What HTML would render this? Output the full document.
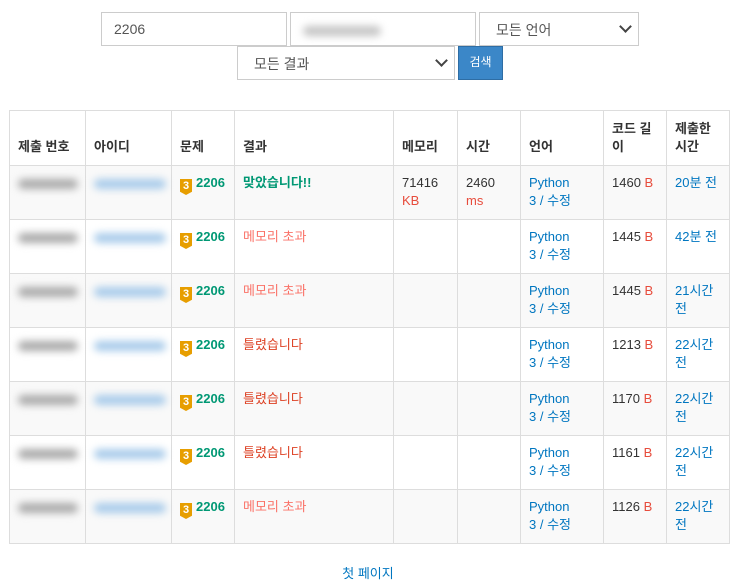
<!DOCTYPE html>
<html><head><meta charset="utf-8"><style>
body{margin:0;background:#fff;font-family:"Liberation Sans","Noto Sans CJK KR",sans-serif;font-size:13px;color:#333;width:736px;height:581px;overflow:hidden;position:relative}
.box{position:absolute;border:1px solid #ccc;box-sizing:border-box;background:#fff;font-size:14px;color:#555}
.chev{position:absolute;right:8px;top:9px;width:7px;height:7px;border-right:2px solid #444;border-bottom:2px solid #444;transform:rotate(45deg)}
table{position:absolute;left:9px;top:110px;border-collapse:collapse;table-layout:fixed;width:720px}
td,th{border:1px solid #ddd;padding:8px 8px;vertical-align:top;line-height:18px;text-align:left}
th{height:37px;vertical-align:bottom;font-weight:bold;color:#333;padding-bottom:9px;padding-top:8px}
tr.b td{height:37px}
tr.s td{background:#f9f9f9}
.bl{display:inline-block;height:10px;border-radius:5px;filter:blur(4px);margin-top:5px}
.g{background:#aaa;width:60px}.lb{background:#a8cbea;width:72px}
.p{color:#009874;font-weight:bold}
.badge{display:inline-block;width:12px;height:16px;background:#e79e00;color:#fff;font-size:11px;text-align:center;line-height:14px;vertical-align:-2px;margin-right:4px;clip-path:polygon(0 0,100% 0,100% 80%,50% 100%,0 80%)}
.ac{color:#009874;font-weight:bold}.me{color:#fa7268}.wa{color:#dd4124}
.r{color:#e74c3c}.lk{color:#0076c0}
</style></head><body>
<div class="box" style="left:101px;top:12px;width:186px;height:34px;padding:8px 12px">2206</div>
<div class="box" style="left:290px;top:12px;width:186px;height:34px"><span class="bl g" style="position:absolute;left:12px;top:8px;width:78px;background:#c4c4c4"></span></div>
<div class="box" style="left:479px;top:12px;width:160px;height:34px;padding:7px 16px">모든 언어<span class="chev"></span></div>
<div class="box" style="left:237px;top:46px;width:218px;height:34px;padding:7px 16px">모든 결과<span class="chev"></span></div>
<div style="position:absolute;left:458px;top:46px;width:45px;height:34px;background:#3b87c8;border:1px solid #2e6da4;box-sizing:border-box;color:#fff;font-size:12px;text-align:center;line-height:31px">검색</div>
<table>
<colgroup><col style="width:76px"><col style="width:86px"><col style="width:63px"><col style="width:159px"><col style="width:64px"><col style="width:63px"><col style="width:83px"><col style="width:63px"><col style="width:63px"></colgroup>
<tr><th>제출 번호</th><th>아이디</th><th>문제</th><th>결과</th><th>메모리</th><th>시간</th><th>언어</th><th>코드 길이</th><th>제출한 시간</th></tr>
<tr class="b s"><td><span class="bl g"></span></td><td><span class="bl lb"></span></td><td class="p"><span class="badge">3</span>2206</td><td class="ac">맞았습니다!!</td><td>71416<br><span class="r">KB</span></td><td>2460<br><span class="r">ms</span></td><td class="lk">Python<br>3 / 수정</td><td>1460 <span class="r">B</span></td><td class="lk">20분 전</td></tr>
<tr class="b"><td><span class="bl g"></span></td><td><span class="bl lb"></span></td><td class="p"><span class="badge">3</span>2206</td><td class="me">메모리 초과</td><td></td><td></td><td class="lk">Python<br>3 / 수정</td><td>1445 <span class="r">B</span></td><td class="lk">42분 전</td></tr>
<tr class="b s"><td><span class="bl g"></span></td><td><span class="bl lb"></span></td><td class="p"><span class="badge">3</span>2206</td><td class="me">메모리 초과</td><td></td><td></td><td class="lk">Python<br>3 / 수정</td><td>1445 <span class="r">B</span></td><td class="lk">21시간<br>전</td></tr>
<tr class="b"><td><span class="bl g"></span></td><td><span class="bl lb"></span></td><td class="p"><span class="badge">3</span>2206</td><td class="wa">틀렸습니다</td><td></td><td></td><td class="lk">Python<br>3 / 수정</td><td>1213 <span class="r">B</span></td><td class="lk">22시간<br>전</td></tr>
<tr class="b s"><td><span class="bl g"></span></td><td><span class="bl lb"></span></td><td class="p"><span class="badge">3</span>2206</td><td class="wa">틀렸습니다</td><td></td><td></td><td class="lk">Python<br>3 / 수정</td><td>1170 <span class="r">B</span></td><td class="lk">22시간<br>전</td></tr>
<tr class="b"><td><span class="bl g"></span></td><td><span class="bl lb"></span></td><td class="p"><span class="badge">3</span>2206</td><td class="wa">틀렸습니다</td><td></td><td></td><td class="lk">Python<br>3 / 수정</td><td>1161 <span class="r">B</span></td><td class="lk">22시간<br>전</td></tr>
<tr class="b s"><td><span class="bl g"></span></td><td><span class="bl lb"></span></td><td class="p"><span class="badge">3</span>2206</td><td class="me">메모리 초과</td><td></td><td></td><td class="lk">Python<br>3 / 수정</td><td>1126 <span class="r">B</span></td><td class="lk">22시간<br>전</td></tr>
</table>
<div style="position:absolute;left:0;width:736px;top:563px;text-align:center;color:#0076c0;font-size:13px">첫 페이지</div>
</body></html>
